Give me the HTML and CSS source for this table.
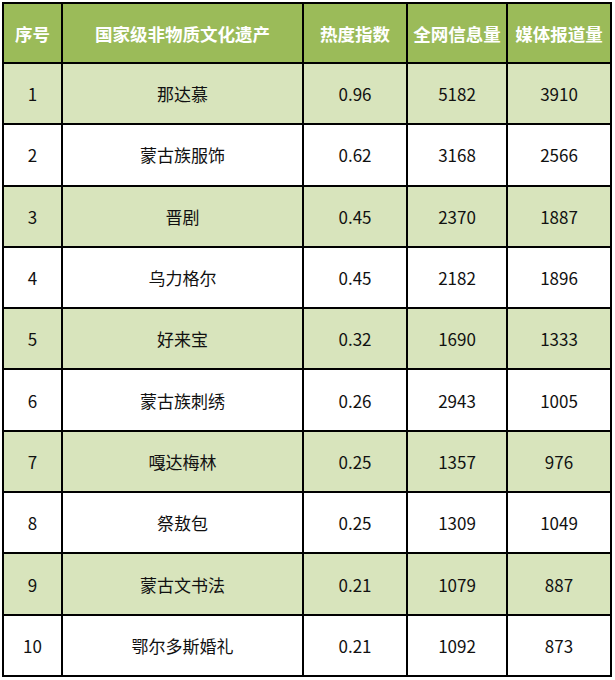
FILE: index.html
```html
<!DOCTYPE html>
<html lang="zh">
<head>
<meta charset="utf-8">
<link rel="stylesheet" href="styles.css">
</head>
<body>
<table class="tbl">
  <colgroup>
    <col class="c1"><col class="c2"><col class="c3"><col class="c4"><col class="c5">
  </colgroup>
  <thead>
    <tr><th>序号</th><th>国家级非物质文化遗产</th><th>热度指数</th><th>全网信息量</th><th>媒体报道量</th></tr>
  </thead>
  <tbody>
    <tr class="alt"><td>1</td><td>那达慕</td><td>0.96</td><td>5182</td><td>3910</td></tr>
    <tr><td>2</td><td>蒙古族服饰</td><td>0.62</td><td>3168</td><td>2566</td></tr>
    <tr class="alt"><td>3</td><td>晋剧</td><td>0.45</td><td>2370</td><td>1887</td></tr>
    <tr><td>4</td><td>乌力格尔</td><td>0.45</td><td>2182</td><td>1896</td></tr>
    <tr class="alt"><td>5</td><td>好来宝</td><td>0.32</td><td>1690</td><td>1333</td></tr>
    <tr><td>6</td><td>蒙古族刺绣</td><td>0.26</td><td>2943</td><td>1005</td></tr>
    <tr class="alt"><td>7</td><td>嘎达梅林</td><td>0.25</td><td>1357</td><td>976</td></tr>
    <tr><td>8</td><td>祭敖包</td><td>0.25</td><td>1309</td><td>1049</td></tr>
    <tr class="alt"><td>9</td><td>蒙古文书法</td><td>0.21</td><td>1079</td><td>887</td></tr>
    <tr><td>10</td><td>鄂尔多斯婚礼</td><td>0.21</td><td>1092</td><td>873</td></tr>
  </tbody>
</table>
</body>
</html>
```
FILE: styles.css
```css
html, body {
  margin: 0;
  padding: 0;
  background: #ffffff;
}
body {
  padding: 2px 0 0 2px;
  font-family: "Noto Sans CJK SC", "Noto Sans", sans-serif;
}
.tbl {
  border-collapse: collapse;
  table-layout: fixed;
  width: 610px;
}
.c1 { width: 59px; }
.c2 { width: 241px; }
.c3 { width: 104px; }
.c4 { width: 100px; }
.c5 { width: 104px; }
.tbl th, .tbl td {
  border: 2px solid #000;
  text-align: center;
  padding: 0;
  overflow: hidden;
  white-space: nowrap;
}
.tbl th {
  background: #9bbb59;
  color: #ffffff;
  font-weight: bold;
  font-size: 17.5px;
  height: 58px;
}
.tbl td {
  height: 59.3px;
  font-size: 17px;
  color: #111;
}
.tbl tr.alt td {
  background: #d8e4bc;
}
```
